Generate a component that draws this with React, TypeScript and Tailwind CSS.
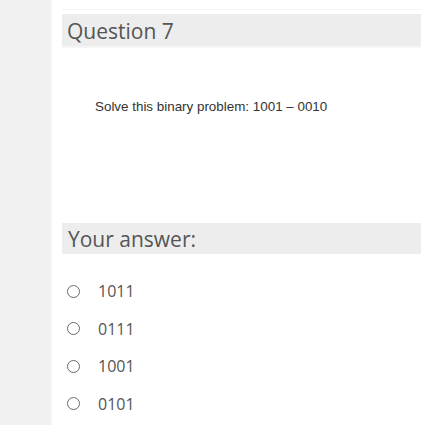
import React from 'react';

const options = ['1011', '0111', '1001', '0101'];

function App() {
  return (
    <div className="flex min-h-[425px] w-full bg-white" style={{ fontFamily: '"Open Sans", sans-serif' }}>
      <div className="w-[52px] shrink-0 border-r border-[#f7f7f7] bg-[#f1f1f1]" />
      <div className="flex-1 pl-[10px] pt-[9px]">
        <div className="border-t border-[#f6f6f6] pt-[4px]">
          <div className="flex h-[32px] items-center bg-[#ededed] pl-[5px] pt-[2px] text-[21px] leading-none text-[#555]">
            Question 7
          </div>
          <div className="h-[2px] bg-[#f5f5f5]" />
        </div>
        <div
          className="pl-[33px] pt-[51px] text-[13.4px] leading-[16px] text-[#333]"
          style={{ fontFamily: '"Liberation Sans", Arial, sans-serif' }}
        >
          Solve this binary problem: 1001 – 0010
        </div>
        <div className="mt-[108px] flex h-[31px] items-center bg-[#ededed] pl-[6px] pt-[2px] text-[21px] leading-none text-[#555]">
          Your answer:
        </div>
        <div className="flex flex-col gap-[19.5px] pt-[28px]">
          {options.map((o) => (
            <label key={o} className="flex h-[18px] items-center">
              <span className="ml-[5px] h-[13px] w-[13px] rounded-full border border-[#6a6a6a] bg-white" />
              <span className="ml-[18px] text-[16px] leading-none text-[#555]">{o}</span>
            </label>
          ))}
        </div>
      </div>
    </div>
  );
}

export default App;
